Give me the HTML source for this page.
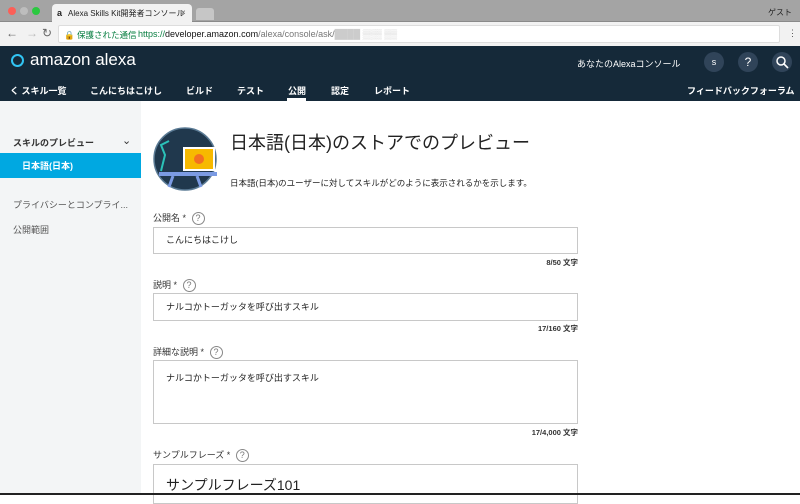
<!DOCTYPE html><html><head><meta charset="utf-8"><style>
*{margin:0;padding:0;box-sizing:border-box}
body{width:800px;height:495px;overflow:hidden;font-family:"Liberation Sans","Noto Sans CJK JP",sans-serif;background:#fff;position:relative;color:#222}
.a{position:absolute}
.lbl{font-size:9px;color:#333}
.q{display:inline-block;width:13px;height:13px;border:1px solid #888;border-radius:50%;font-size:9px;text-align:center;line-height:11px;color:#777;margin-left:3px;vertical-align:middle}
.inp{border:1px solid #c8c8c8;background:#fff;font-size:9px;padding-left:12px;color:#222}
.cnt{font-size:7.5px;font-weight:bold;text-align:right;width:425px;left:153px;color:#333}
.nav span{position:absolute;top:84px;font-size:9px;color:#fff;font-weight:bold}
</style></head><body>
<div class="a" style="left:0;top:0;width:800px;height:22px;background:#a4a4a4;border-bottom:1px solid #8a8a8a"></div>
<div class="a" style="left:8px;top:7px;width:8px;height:8px;border-radius:50%;background:#fc5f57"></div>
<div class="a" style="left:20px;top:7px;width:8px;height:8px;border-radius:50%;background:#bdbdbd"></div>
<div class="a" style="left:32px;top:7px;width:8px;height:8px;border-radius:50%;background:#2bc840"></div>
<div class="a" style="left:52px;top:4px;width:140px;height:19px;background:#f2f2f2;border-radius:4px 4px 0 0"></div>
<div class="a" style="left:57px;top:8px;font-size:9px;font-weight:bold">a</div>
<div class="a" style="left:68px;top:8px;font-size:8px;color:#222">Alexa Skills Kit開発者コンソール</div>
<div class="a" style="left:181px;top:8px;font-size:8px;color:#555">×</div>
<div class="a" style="left:196px;top:8px;width:18px;height:12px;background:#c6c6c6;border-radius:3px 3px 0 0"></div>
<div class="a" style="right:8px;top:7px;font-size:8px;color:#222">ゲスト</div>
<div class="a" style="left:0;top:22px;width:800px;height:24px;background:#f2f2f2"></div>
<div class="a" style="left:6px;top:26px;font-size:12px;color:#666">←</div>
<div class="a" style="left:26px;top:26px;font-size:12px;color:#bbb">→</div>
<div class="a" style="left:42px;top:26px;font-size:12px;color:#666">↻</div>
<div class="a" style="left:58px;top:25px;width:722px;height:18px;background:#fff;border:1px solid #ddd;border-radius:2px"></div>
<div class="a" style="left:64px;top:29px;font-size:8.5px;color:#0b8043">🔒 保護された通信</div>
<div class="a" style="left:138px;top:29px;font-size:9px;color:#0b8043">https://<span style="color:#111">developer.amazon.com</span><span style="color:#777">/alexa/console/ask/</span><span style="color:#ccc">████ ▒▒▒ ▒▒</span></div>
<div class="a" style="left:788px;top:28px;font-size:9px;color:#555">⋮</div>
<div class="a" style="left:0;top:46px;width:800px;height:55px;background:#152939"></div>
<div class="a" style="left:11px;top:54px;width:13px;height:13px;border:2px solid #31c4f3;border-radius:50%"></div>
<div class="a" style="left:30px;top:50px;font-size:17px;color:#fff">amazon alexa</div>
<div class="a" style="left:577px;top:57px;font-size:9px;color:#fff">あなたのAlexaコンソール</div>
<div class="a" style="left:704px;top:52px;width:20px;height:20px;border-radius:50%;background:#304459;color:#fff;font-size:9px;text-align:center;line-height:20px">s</div>
<div class="a" style="left:738px;top:52px;width:20px;height:20px;border-radius:50%;background:#304459;color:#fff;font-size:12px;text-align:center;line-height:20px">?</div>
<div class="a" style="left:772px;top:52px;width:20px;height:20px;border-radius:50%;background:#304459"><svg width="20" height="20"><circle cx="9" cy="9" r="4" stroke="#fff" stroke-width="1.5" fill="none"/><path d="M12 12l4 4" stroke="#fff" stroke-width="1.6"/></svg></div>
<div class="nav"><span style="left:10px">く スキル一覧</span><span style="left:90px">こんにちはこけし</span><span style="left:186px">ビルド</span><span style="left:237px">テスト</span><span style="left:288px">公開</span><span style="left:331px">認定</span><span style="left:374px">レポート</span><span style="left:687px">フィードバックフォーラム</span></div>
<div class="a" style="left:287px;top:98px;width:19px;height:3px;background:#fff"></div>
<div class="a" style="left:0;top:101px;width:141px;height:392px;background:#f3f5f6"></div>
<div class="a" style="left:13px;top:136px;font-size:9px;font-weight:bold;color:#333">スキルのプレビュー</div>
<div class="a" style="left:122px;top:134px;font-size:11px;color:#333">⌄</div>
<div class="a" style="left:0;top:153px;width:141px;height:25px;background:#00a8e1"></div>
<div class="a" style="left:22px;top:159px;font-size:9px;color:#fff;font-weight:bold">日本語(日本)</div>
<div class="a" style="left:13px;top:198px;font-size:9px;color:#555">プライバシーとコンプライ...</div>
<div class="a" style="left:13px;top:223px;font-size:9px;color:#555">公開範囲</div>
<svg class="a" style="left:153px;top:127px" width="66" height="66"><circle cx="32" cy="32" r="31" fill="#20384d" stroke="#5a7a94" stroke-width="1.5"/><rect x="30" y="20" width="32" height="24" fill="#fff"/><rect x="32" y="22" width="28" height="20" fill="#f7b900"/><circle cx="46" cy="32" r="5" fill="#f37021"/><path d="M8 44L12 28L8 18L16 14" stroke="#2bc2b9" stroke-width="2" fill="none"/><rect x="6" y="45" width="58" height="4" fill="#7b9be3"/><path d="M20 49L16 60M44 49L48 60" stroke="#7b9be3" stroke-width="3"/></svg>
<div class="a" style="left:230px;top:129px;font-size:18px;color:#222">日本語(日本)のストアでのプレビュー</div>
<div class="a" style="left:230px;top:177px;font-size:8.5px;color:#222">日本語(日本)のユーザーに対してスキルがどのように表示されるかを示します。</div>
<div class="a lbl" style="left:153px;top:211px">公開名 * <span class="q">?</span></div>
<div class="a inp" style="left:153px;top:227px;width:425px;height:27px;line-height:25px">こんにちはこけし</div>
<div class="a cnt" style="top:257px">8/50 文字</div>
<div class="a lbl" style="left:153px;top:278px">説明 * <span class="q">?</span></div>
<div class="a inp" style="left:153px;top:293px;width:425px;height:28px;line-height:26px">ナルコかトーガッタを呼び出すスキル</div>
<div class="a cnt" style="top:323px">17/160 文字</div>
<div class="a lbl" style="left:153px;top:345px">詳細な説明 * <span class="q">?</span></div>
<div class="a inp" style="left:153px;top:360px;width:425px;height:64px;padding-top:10px">ナルコかトーガッタを呼び出すスキル</div>
<div class="a cnt" style="top:427px">17/4,000 文字</div>
<div class="a lbl" style="left:153px;top:448px">サンプルフレーズ * <span class="q">?</span></div>
<div class="a inp" style="left:153px;top:464px;width:425px;height:40px;font-size:14px;padding-top:10px">サンプルフレーズ101</div>
<div class="a" style="left:0;top:493px;width:800px;height:2px;background:#222"></div>
</body></html>
